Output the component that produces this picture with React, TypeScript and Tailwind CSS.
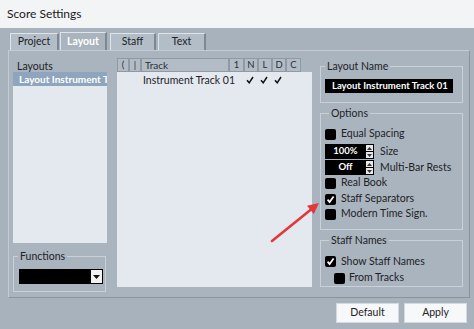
import React from "react";

function Check({ checked }: { checked?: boolean }) {
  return (
    <span className="w-[11px] h-[11px] bg-black rounded-[2px] flex items-center justify-center shrink-0">
      {checked && (
        <svg width="9" height="9" viewBox="0 0 9 9">
          <path d="M1.6 4.6 L3.6 7 L7.6 1.4" stroke="white" strokeWidth="1.7" fill="none" />
        </svg>
      )}
    </span>
  );
}

function Tick() {
  return (
    <svg width="8" height="8" viewBox="0 0 8 8">
      <path d="M1 4.2 L3.2 6.8 L7 1" stroke="#111" strokeWidth="1.5" fill="none" />
    </svg>
  );
}

function Spinner({ value }: { value: string }) {
  return (
    <span className="w-[49px] h-[15px] bg-black flex shrink-0">
      <span className="flex-1 flex items-center justify-center text-white font-bold text-[9.5px]">{value}</span>
      <span className="w-[8px] flex flex-col gap-[1px] py-[1px] pr-[1px]">
        <span className="flex-1 bg-[#e8e8e8] flex items-center justify-center">
          <svg width="5" height="3" viewBox="0 0 5 3"><path d="M0 3 L2.5 0 L5 3Z" fill="#333" /></svg>
        </span>
        <span className="flex-1 bg-[#e8e8e8] flex items-center justify-center">
          <svg width="5" height="3" viewBox="0 0 5 3"><path d="M0 0 L2.5 3 L5 0Z" fill="#333" /></svg>
        </span>
      </span>
    </span>
  );
}

function Group({ title, className, children }: { title: string; className?: string; children?: React.ReactNode }) {
  return (
    <fieldset className={"border border-[#c9d0d7] min-w-0 " + (className ?? "")}>
      <legend className="ml-[4px] px-[2px] text-[10.5px] leading-[12px] text-[#1d2227]">{title}</legend>
      {children}
    </fieldset>
  );
}

export default function App() {
  const hdr = "h-[14px] border border-[#8f9aa5] bg-[#b3bcc6] flex items-center justify-center text-[9.5px] text-[#2a2f35] shrink-0";
  const tab = "h-[17px] bg-[#b3bdc7] border-t border-l border-[#dfe4e9] border-r-2 border-r-[#7d8893] flex items-center justify-center text-[10.5px] text-[#1d2227]";
  return (
    <div className="w-[474px] h-[329px] bg-[#a8b2bc] flex flex-col overflow-hidden relative font-['Lato','Noto_Sans',sans-serif] text-[#1d2227]">
      {/* title bar */}
      <div className="h-[28px] bg-[#f3f4f6] flex items-center pl-[7px] text-[12px] text-[#1a1a1a] shrink-0">
        Score Settings
      </div>
      {/* tabs */}
      <div className="h-[22px] flex items-end pl-[10px] shrink-0">
        <div className={tab + " w-[49px]"}>Project</div>
        <div className="ml-[1px] w-[47px] h-[18px] bg-[#aab4be] border-t border-l border-[#dfe4e9] border-r-2 border-r-[#7d8893] flex items-center justify-center text-[10.5px] font-bold text-white">Layout</div>
        <div className={tab + " ml-[3px] w-[46px]"}>Staff</div>
        <div className={tab + " ml-[2px] w-[48px]"}>Text</div>
      </div>
      {/* panel */}
      <div className="ml-[8px] w-[462px] h-[248px] border-l border-t border-[#c4cbd2] border-b border-b-[#8a949e] border-r border-r-[#8a949e] bg-[#aab4be] flex pt-[7px] pl-[4px] shrink-0 text-[10.5px]">
        {/* left column */}
        <div className="w-[94px] flex flex-col mt-[2px]">
          <div className="h-[12px] leading-[12px] pl-[4px]">Layouts</div>
          <div className="h-[171px] bg-[#e4e9ef] flex flex-col">
            <div className="h-[14px] bg-[#8ea5bd] text-white font-bold text-[10px] leading-[14px] pl-[6px] whitespace-nowrap overflow-hidden">
              Layout Instrument Track 01
            </div>
          </div>
          <Group title="Functions" className="mt-[7px] w-[93px] pb-[7px]">
            <div className="mt-[7px] ml-[5px] w-[84px] h-[15px] bg-black flex justify-end p-[1px]">
              <span className="w-[11px] h-full bg-[#f2f2f2] flex items-center justify-center">
                <svg width="7" height="4" viewBox="0 0 7 4"><path d="M0 0 L3.5 4 L7 0Z" fill="#111" /></svg>
              </span>
            </div>
          </Group>
        </div>
        {/* middle */}
        <div className="ml-[10px] w-[195px] h-[229px] flex flex-col">
          <div className="flex h-[14px]">
            <div className={hdr + " w-[12px]"}>(</div>
            <div className={hdr + " w-[12px]"}>|</div>
            <div className={hdr + " w-[88px] !justify-start pl-[3px] text-[10px]"}>Track</div>
            <div className={hdr + " w-[15px]"}>1</div>
            <div className={hdr + " w-[14px]"}>N</div>
            <div className={hdr + " w-[14px]"}>L</div>
            <div className={hdr + " w-[14px]"}>D</div>
            <div className={hdr + " w-[15px]"}>C</div>
          </div>
          <div className="flex-1 bg-[#e4e9ef]">
            <div className="flex h-[14px] items-center mt-[1px]">
              <div className="w-[112px] pl-[26px] leading-[14px] whitespace-nowrap">Instrument Track 01</div>
              <div className="w-[15px]" />
              <div className="w-[14px] flex justify-center pr-[3px]"><Tick /></div>
              <div className="w-[14px] flex justify-center pr-[3px]"><Tick /></div>
              <div className="w-[14px] flex justify-center pr-[3px]"><Tick /></div>
            </div>
          </div>
        </div>
        {/* right */}
        <div className="ml-[8px] w-[143px] flex flex-col mt-[2px]">
          <Group title="Layout Name" className="pb-[9px]">
            <div className="mt-[7px] ml-[4px] w-[128px] h-[14px] bg-black text-white font-bold text-[9.5px] leading-[14px] pl-[7px] whitespace-nowrap overflow-hidden">
              Layout Instrument Track 01
            </div>
          </Group>
          <Group title="Options" className="mt-[4px] pb-[8px] pl-[4px]">
            <div className="mt-[8px] h-[14px] flex items-center gap-[5px]"><Check /><span>Equal Spacing</span></div>
            <div className="mt-[3px] h-[15px] flex items-center gap-[6px]"><Spinner value="100%" /><span>Size</span></div>
            <div className="mt-[1px] h-[15px] flex items-center gap-[6px]"><Spinner value="Off" /><span>Multi-Bar Rests</span></div>
            <div className="mt-[1px] h-[14px] flex items-center gap-[5px]"><Check /><span>Real Book</span></div>
            <div className="mt-[2px] h-[14px] flex items-center gap-[5px]"><Check checked /><span>Staff Separators</span></div>
            <div className="mt-[1px] h-[14px] flex items-center gap-[5px]"><Check /><span>Modern Time Sign.</span></div>
          </Group>
          <Group title="Staff Names" className="mt-[4px] pb-[1px] pl-[4px]">
            <div className="mt-[8px] h-[15px] flex items-center gap-[5px]"><Check checked /><span>Show Staff Names</span></div>
            <div className="mt-[2px] h-[14px] flex items-center gap-[4px] pl-[9px]"><Check /><span>From Tracks</span></div>
          </Group>
        </div>
      </div>
      {/* buttons */}
      <div className="flex justify-end gap-[5px] pr-[7px] pt-[5px]">
        <div className="w-[63px] h-[20px] bg-[#f7f8f9] border border-[#d5dade] flex items-center justify-center text-[10.5px] text-[#1d2227]">Default</div>
        <div className="w-[63px] h-[20px] bg-[#f7f8f9] border border-[#d5dade] flex items-center justify-center text-[10.5px] text-[#1d2227]">Apply</div>
      </div>
      {/* red annotation arrow */}
      <svg className="absolute left-0 top-0 pointer-events-none" width="474" height="329" viewBox="0 0 474 329">
        <line x1="272" y1="241" x2="311" y2="209.5" stroke="#e2383a" strokeWidth="2.6" strokeLinecap="round" />
        <polygon points="319,203 313.8,214 307,205.8" fill="#e2383a" />
      </svg>
    </div>
  );
}
